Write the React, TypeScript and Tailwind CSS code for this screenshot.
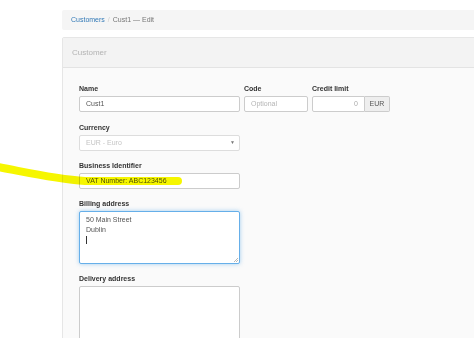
import React from "react";

const Label: React.FC<{ children: React.ReactNode }> = ({ children }) => (
  <div className="h-[9px] leading-[9px] mb-[3px] text-[7px] font-bold text-[#333]">{children}</div>
);

export default function App() {
  return (
    <div className="relative w-full h-[338px] overflow-hidden bg-white font-['Liberation_Sans',Arial,sans-serif]">
      <div className="ml-[62px] pt-[10px] w-[430px]">
        {/* breadcrumb */}
        <div className="h-[20px] bg-[#f5f5f5] rounded-[2px] pl-[9px] flex items-center text-[7px]">
          <span className="text-[#337ab7]">Customers</span>
          <span className="text-[#ccc] px-[3px]">/</span>
          <span className="text-[#777]">Cust1 — Edit</span>
        </div>

        {/* panel */}
        <div className="mt-[7px] border border-[#e6e6e6] rounded-[2px] bg-[#fafafa]">
          <div className="h-[30px] bg-[#f3f3f3] border-b border-[#e3e3e3] pl-[9px] flex items-center text-[8px] text-[#b3b3b3]">
            Customer
          </div>
          <div className="pl-[16px] pt-[16px] pb-[40px]">
            {/* row 1 */}
            <div className="flex gap-[4px] mb-[11px]">
              <div className="w-[161px]">
                <Label>Name</Label>
                <div className="h-[16px] bg-white border border-[#ccc] rounded-[2px] px-[6px] flex items-center text-[7px] text-[#555]">Cust1</div>
              </div>
              <div className="w-[64px]">
                <Label>Code</Label>
                <div className="h-[16px] bg-white border border-[#ccc] rounded-[2px] px-[6px] flex items-center text-[7px] text-[#b5b5b5]">Optional</div>
              </div>
              <div className="w-[78px]">
                <Label>Credit limit</Label>
                <div className="flex h-[16px]">
                  <div className="flex-1 bg-white border border-[#ccc] rounded-l-[2px] px-[6px] flex items-center justify-end text-[7px] text-[#aaa]">0</div>
                  <div className="w-[25px] bg-[#eee] border border-l-0 border-[#ccc] rounded-r-[2px] flex items-center justify-center text-[7px] text-[#555]">EUR</div>
                </div>
              </div>
            </div>

            {/* currency */}
            <div className="w-[161px] mb-[10px]">
              <Label>Currency</Label>
              <div className="h-[16px] bg-white border border-[#ddd] rounded-[2px] pl-[6px] pr-[4px] flex items-center justify-between text-[7px] text-[#c4c4c4]">
                <span>EUR - Euro</span>
                <span className="text-[5px] text-[#777]">▼</span>
              </div>
            </div>

            {/* business identifier */}
            <div className="w-[161px] mb-[10px]">
              <Label>Business Identifier</Label>
              <div className="h-[16px] bg-white border border-[#ccc] rounded-[2px] px-[6px] flex items-center text-[7px] text-[#555]">VAT Number: ABC123456</div>
            </div>

            {/* billing */}
            <div className="w-[161px] mb-[10px]">
              <Label>Billing address</Label>
              <div className="relative h-[53px] bg-white border border-[#66afe9] rounded-[2px] shadow-[0_0_4px_rgba(102,175,233,0.6)] px-[6px] pt-[3px] text-[7px] leading-[10px] text-[#555]">
                <div>50 Main Street</div>
                <div>Dublin</div>
                <div className="w-px h-[8px] bg-[#333] mt-[1px]" />
                <svg className="absolute right-[1px] bottom-[1px]" width="5" height="5" viewBox="0 0 5 5">
                  <path d="M1 5 L5 1 M3 5 L5 3" stroke="#999" strokeWidth="0.7" />
                </svg>
              </div>
            </div>

            {/* delivery */}
            <div className="w-[161px]">
              <Label>Delivery address</Label>
              <div className="h-[60px] bg-white border border-[#ccc] rounded-[2px]" />
            </div>
          </div>
        </div>
      </div>

      {/* highlighter stroke */}
      <svg className="absolute left-0 top-0 pointer-events-none mix-blend-multiply" width="474" height="338" viewBox="0 0 474 338">
        <path d="M -2 167 C 30 173, 55 179, 85 181 L 178 181" fill="none" stroke="#f6f600" strokeWidth="8" strokeLinecap="round" />
      </svg>
    </div>
  );
}
